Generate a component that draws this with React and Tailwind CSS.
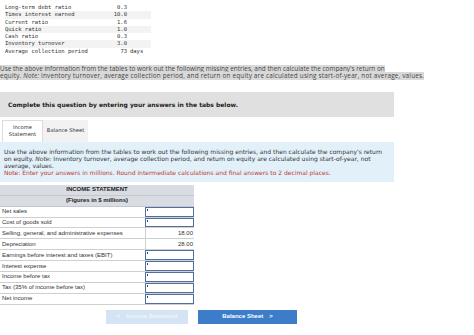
import React from 'react'

const ratios = [
  ['Long-term debt ratio', '0.3', ''],
  ['Times interest earned', '10.0', ''],
  ['Current ratio', '1.6', ''],
  ['Quick ratio', '1.0', ''],
  ['Cash ratio', '0.3', ''],
  ['Inventory turnover', '3.0', ''],
  ['Average collection period', '73', 'days'],
]

const rows = [
  ['Net sales', null],
  ['Cost of goods sold', null],
  ['Selling, general, and administrative expenses', '18.00'],
  ['Depreciation', '28.00'],
  ['Earnings before interest and taxes (EBIT)', null],
  ['Interest expense', null],
  ['Income before tax', null],
  ['Tax (35% of income before tax)', null],
  ['Net income', null],
]

const App = () => {
  return (
    <div className="w-[474px] h-[335px] bg-white overflow-hidden relative">
      {/* ratio table */}
      <div className="pt-[4px] pl-[5px] font-['DejaVu_Sans_Mono',monospace] text-[5.5px] text-[#333] leading-[7.3px]">
        {ratios.map(([label, val, unit], i) => (
          <div key={label} className={`flex w-[146px] ${i % 2 === 1 ? 'bg-[#f3f3f3]' : ''}`}>
            <span className="w-[103px]">{label}</span>
            <span className="w-[19px] text-right">{val}</span>
            <span className="pl-[3px]">{unit}</span>
          </div>
        ))}
      </div>

      {/* highlighted paragraph */}
      <div className="mt-[10px] flex flex-col items-start whitespace-nowrap font-['Open_Sans',sans-serif] text-[6.4px] leading-[7.3px] text-[#444]">
        <span className="bg-[#d9d9d9] tracking-[0.02px]">
          Use the above information from the tables to work out the following missing entries, and then calculate the company's return on
        </span>
        <span className="bg-[#d9d9d9] tracking-[0.18px]">
          equity. <i>Note:</i> Inventory turnover, average collection period, and return on equity are calculated using start-of-year, not average, values.
        </span>
      </div>

      {/* instruction box */}
      <div className="mt-[12px] w-[394px] h-[25px] bg-[#e0e0e0] flex items-center pl-[8px] font-['DejaVu_Sans',sans-serif] text-[6px] font-bold text-[#222]">
        Complete this question by entering your answers in the tabs below.
      </div>

      {/* tabs */}
      <div className="mt-[3px] flex pl-[2px] font-['DejaVu_Sans',sans-serif] text-[5.2px] text-[#333]">
        <div className="w-[41px] h-[22px] bg-white border border-b-0 border-[#dcdcdc] flex flex-col items-center justify-center leading-[7px]">
          <span>Income</span>
          <span>Statement</span>
        </div>
        <div className="w-[45px] h-[22px] bg-[#f2f2f2] flex items-center justify-center">Balance Sheet</div>
      </div>

      {/* info box */}
      <div className="w-[394px] h-[40px] bg-[#e2f0fa] pt-[6px] pl-[4px] whitespace-nowrap font-['DejaVu_Sans',sans-serif] text-[6px] leading-[7px] text-[#333]">
        <p>Use the above information from the tables to work out the following missing entries, and then calculate the company's return</p>
        <p>on equity. <i>Note:</i> Inventory turnover, average collection period, and return on equity are calculated using start-of-year, not</p>
        <p>average, values.</p>
        <p className="text-[#c0392b]">Note: Enter your answers in millions. Round intermediate calculations and final answers to 2 decimal places.</p>
      </div>

      {/* income statement */}
      <div className="mt-[3px] w-[194px] font-['Liberation_Sans',sans-serif] text-[6px] text-[#333]">
        <div className="h-[11px] bg-[#d9dde3] border-b border-[#c4c8ce] flex items-center justify-center font-bold text-[#222]">INCOME STATEMENT</div>
        <div className="h-[11px] bg-[#d9dde3] border-b border-[#c4c8ce] flex items-center justify-center font-bold text-[#222]">(Figures in $ millions)</div>
        {rows.map(([label, val]) => (
          <div key={label} className="flex h-[10.9px] border-b border-[#cfcfcf]">
            <div className="w-[145px] pl-[2px] flex items-center">{label}</div>
            {val ? (
              <div className="flex-1 border-l border-[#cfcfcf] flex items-center justify-end pr-[1px]">{val}</div>
            ) : (
              <div className="flex-1 border border-[#4f6f9f] relative bg-white">
                <span className="absolute left-[1px] top-[1px] w-[1px] h-[2px] bg-[#2a4a7a]"></span>
              </div>
            )}
          </div>
        ))}
      </div>

      {/* nav buttons */}
      <div className="mt-[5px] flex gap-[10px] pl-[106px] font-['Liberation_Sans',sans-serif] text-[6px] font-bold">
        <div className="w-[82px] h-[14px] bg-[#d5e4f4] text-[#eef4fb] flex items-center justify-center gap-[6px]">
          <span>&lt;</span>
          <span>Income Statement</span>
        </div>
        <div className="w-[99px] h-[14px] bg-[#3d7cc9] text-white flex items-center justify-center gap-[6px]">
          <span>Balance Sheet</span>
          <span>&gt;</span>
        </div>
      </div>
    </div>
  )
}

export default App
